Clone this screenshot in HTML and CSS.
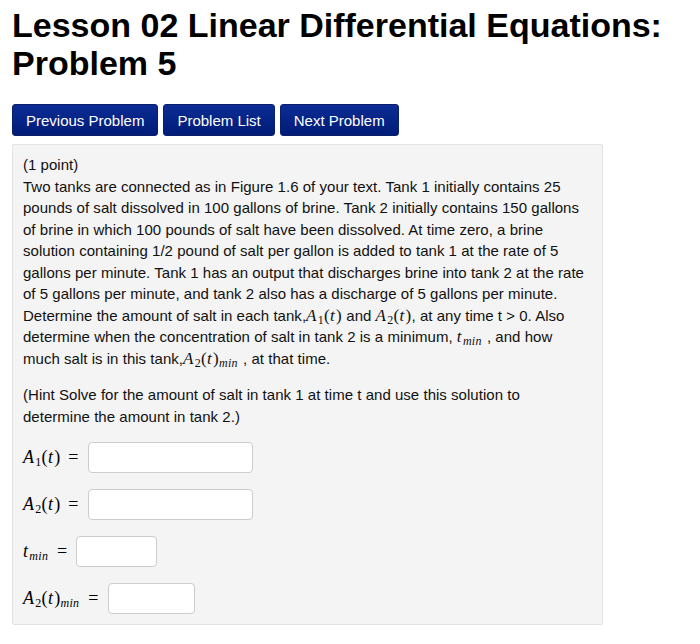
FILE: index.html
```html
<!DOCTYPE html>
<html lang="en">

<head>
    <meta charset="utf-8">
    <meta name="viewport" content="width=device-width, initial-scale=1.0">
    <title>Lesson 02 Linear Differential Equations: Problem 5</title>

    <link rel="stylesheet" href="styles.css">
</head>

<body>

    <header>
        <h1 class="titel">Lesson 02 Linear Differential Equations: Problem 5</h1>
        <nav class="knapper">
            <a class="knap" href="#">Previous Problem</a>
            <a class="knap" href="#">Problem List</a>
            <a class="knap" href="#">Next Problem</a>
        </nav>
    </header>

    <main class="opgave">
        <p class="tekst">(1 point)<br>
            Two tanks are connected as in Figure 1.6 of your text. Tank 1 initially contains 25
            pounds of salt dissolved in 100 gallons of brine. Tank 2 initially contains 150 gallons
            of brine in which 100 pounds of salt have been dissolved. At time zero, a brine
            solution containing 1/2 pound of salt per gallon is added to tank 1 at the rate of 5
            gallons per minute. Tank 1 has an output that discharges brine into tank 2 at the rate
            of 5 gallons per minute, and tank 2 also has a discharge of 5 gallons per minute.
            Determine the amount of salt in each tank,<span class="mat"><i>A</i><sub>1</sub>(<i>t</i>)</span> and
            <span class="mat"><i>A</i><sub>2</sub>(<i>t</i>)</span>, at any time t &gt; 0. Also
            determine when the concentration of salt in tank 2 is a minimum, <span class="mat"><i>t</i><sub><i>min</i></sub></span> , and how
            much salt is in this tank,<span class="mat"><i>A</i><sub>2</sub>(<i>t</i>)<sub><i>min</i></sub></span> , at that time.</p>

        <p class="tekst">(Hint Solve for the amount of salt in tank 1 at time t and use this solution to
            determine the amount in tank 2.)</p>

        <div class="svar">
            <label class="mat etiket"><i>A</i><sub>1</sub>(<i>t</i>) =</label>
            <input class="felt felt-lang" type="text">
        </div>
        <div class="svar">
            <label class="mat etiket"><i>A</i><sub>2</sub>(<i>t</i>) =</label>
            <input class="felt felt-lang" type="text">
        </div>
        <div class="svar">
            <label class="mat etiket"><i>t</i><sub><i>min</i></sub> =</label>
            <input class="felt felt-kort" type="text">
        </div>
        <div class="svar">
            <label class="mat etiket"><i>A</i><sub>2</sub>(<i>t</i>)<sub><i>min</i></sub> =</label>
            <input class="felt felt-mellem" type="text">
        </div>
    </main>

</body>

</html>
```

FILE: styles.css
```css
body {
    margin: 0;
    padding: 0 12px;
    font-family: "Liberation Sans", Arial, sans-serif;
    color: #000;
    background-color: #fff;
}

.titel {
    margin: 0;
    padding-top: 6px;
    font-size: 34px;
    line-height: 38px;
    font-weight: bold;
}

.knapper {
    display: flex;
    gap: 5px;
    margin-top: 22px;
}

.knap {
    display: block;
    height: 32px;
    padding: 0 13px;
    font-size: 15px;
    line-height: 31px;
    color: #fff;
    text-decoration: none;
    border-radius: 3px;
    background: linear-gradient(#0c2c94, #001c78);
    border: 1px solid #0a1f6b;
    box-sizing: border-box;
}

.opgave {
    width: 591px;
    box-sizing: border-box;
    margin-top: 8px;
    padding: 9px 14px 10px 10px;
    background-color: #f4f4f4;
    border: 1px solid #e2e2e2;
    border-radius: 2px;
}

.tekst {
    margin: 0 0 15px;
    font-size: 15px;
    line-height: 21.5px;
    letter-spacing: 0.03px;
    color: #111;
}

.mat {
    font-family: "Liberation Serif", "Times New Roman", serif;
    font-size: 17px;
    letter-spacing: 0.3px;
}

.mat i {
    font-style: italic;
    padding-right: 1px;
}

.mat sub {
    font-size: 12px;
    vertical-align: -3px;
    line-height: 0;
}

.etiket {
    font-size: 18px;
    word-spacing: 3px;
}

.svar {
    display: flex;
    align-items: center;
    gap: 9px;
    height: 31px;
    margin-bottom: 16px;
}

.svar:last-child {
    margin-bottom: 0;
}

.felt {
    height: 31px;
    box-sizing: border-box;
    border: 1px solid #ccc;
    border-radius: 4px;
    background-color: #fff;
}

.felt-lang {
    width: 165px;
}

.felt-kort {
    width: 81px;
}

.felt-mellem {
    width: 87px;
}
```
